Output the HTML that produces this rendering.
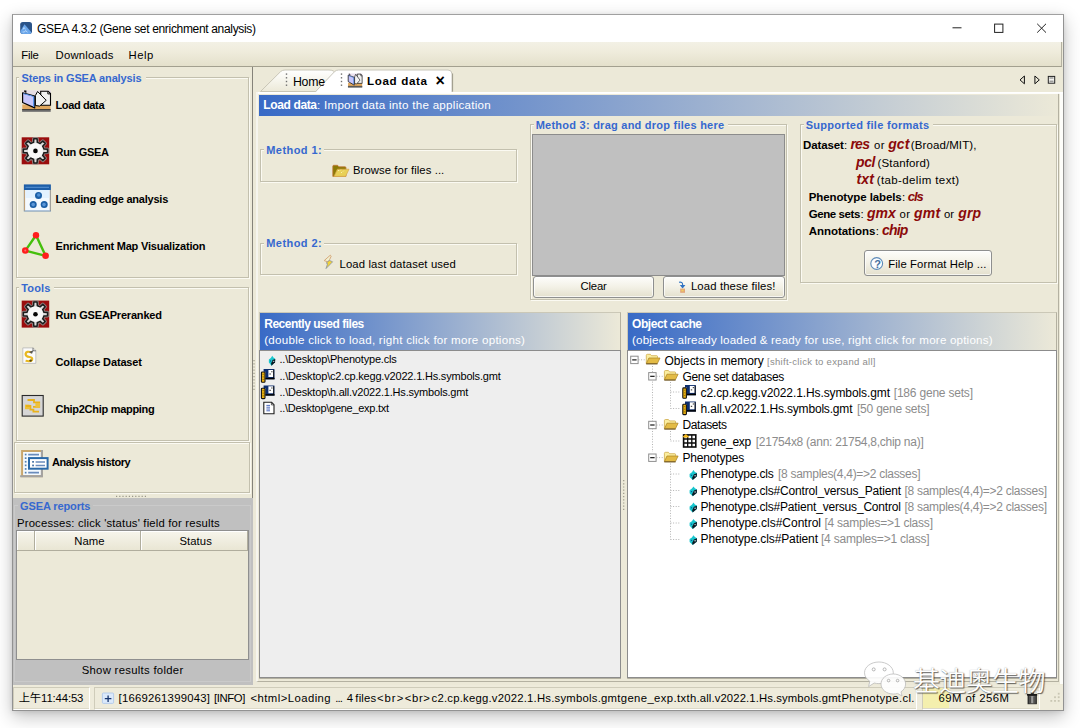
<!DOCTYPE html>
<html><head><meta charset="utf-8"><title>GSEA 4.3.2 (Gene set enrichment analysis)</title>
<style>
*{box-sizing:border-box;margin:0;padding:0}
html,body{width:1080px;height:728px;background:#fff;overflow:hidden}
body{font-family:"Liberation Sans","Noto Sans CJK SC",sans-serif;font-size:12px;color:#000;position:relative}
.a{position:absolute}
.t{position:absolute;white-space:nowrap;line-height:1}
#win{left:12px;top:14px;width:1052px;height:697px;background:#ece9d8;border:1px solid #929292;border-top-color:#a0a0a0;box-shadow:0 6px 17px rgba(0,0,0,.24),0 1px 5px rgba(0,0,0,.10)}
#title{left:13px;top:15px;width:1050px;height:27px;background:#fff}
#menu{left:13px;top:42px;width:1049px;height:25px;background:linear-gradient(#f3f1e5 0%,#efecdc 40%,#e4e0cb 100%);border-bottom:1px solid #a3a08f;border-right:1px solid #b5b2a2}
.grp{border:1px solid #c3c0ae;box-shadow:1px 1px 0 #fbfaf2, inset 1px 1px 0 #fbfaf2}
.mask{background:#ece9d8;height:3px}
.hdr{background:linear-gradient(90deg,#386ac6 0%,#ece9d8 100%)}
.btn{border:1px solid #8e8f8f;border-radius:3px;background:linear-gradient(#fdfdfb 0%,#f3f1e6 50%,#e4e0cd 100%);box-shadow:inset 0 0 0 1px rgba(255,255,255,.7)}
.sb{border:1px solid #fff;border-top-color:#cfccba;border-left-color:#cfccba;box-shadow:inset 0 -1px 0 #dcd9c8}
.th{border-right:1px solid #b0ad9d;border-bottom:1px solid #b0ad9d;background:linear-gradient(#f7f5ec,#e9e6d4);box-shadow:inset 1px 1px 0 #fff}
</style></head><body>
<div class="a" id="win"></div>
<div class="a" id="title"></div>
<div class="a" id="menu"></div>

<!-- LEFT PANEL groups -->
<div class="a grp" style="left:16px;top:77px;width:233px;height:201px"></div>
<div class="a mask" style="left:19px;top:76px;width:127px"></div>
<div class="a grp" style="left:16px;top:287px;width:233px;height:154px"></div>
<div class="a mask" style="left:19px;top:286px;width:35px"></div>
<div class="a grp" style="left:14px;top:442px;width:236px;height:51px"></div>
<!-- vertical divider -->
<div class="a" style="left:252px;top:67px;width:1px;height:618px;background:#85837a"></div>
<!-- reports -->
<div class="a" style="left:13px;top:498px;width:240px;height:187px;background:#c0c0c0"></div>
<div class="a" style="left:14px;top:505px;width:237px;height:177px;border:1px solid #cacaca"></div>
<div class="a" style="left:18px;top:503px;width:75px;height:4px;background:#c0c0c0"></div>
<div class="a" style="left:16px;top:530px;width:233px;height:130px;background:#ece9d8;border:1px solid #8f8f8f"></div>
<div class="a th" style="left:17px;top:531px;width:18px;height:20px"></div>
<div class="a th" style="left:35px;top:531px;width:106px;height:20px"></div>
<div class="a th" style="left:141px;top:531px;width:107px;height:20px"></div>

<!-- STATUS BAR -->
<div class="a" style="left:13px;top:685px;width:1050px;height:25px;background:#eeebdb"></div>
<div class="a sb" style="left:13px;top:687px;width:77px;height:23px"></div>
<div class="a sb" style="left:94px;top:687px;width:823px;height:23px"></div>
<div class="a sb" style="left:922px;top:687px;width:118px;height:23px"></div>
<div class="a" style="left:923px;top:688px;width:26px;height:20px;background:#f4efae"></div>

<!-- RIGHT content frame -->
<div class="a" style="left:256px;top:92px;width:803px;height:590px;border:1px solid #b4b1a1;border-top:none;border-left:2px solid #f6f5ee"></div>
<div class="a" style="left:1060px;top:92px;width:3px;height:592px;background:#fdfdfa"></div>
<div class="a hdr" style="left:259px;top:95px;width:799px;height:21px"></div>

<div class="a grp" style="left:260px;top:149px;width:257px;height:33px"></div>
<div class="a mask" style="left:264px;top:148px;width:60px"></div>
<div class="a grp" style="left:260px;top:243px;width:257px;height:32px"></div>
<div class="a mask" style="left:264px;top:242px;width:60px"></div>

<div class="a grp" style="left:530px;top:124px;width:257px;height:176px"></div>
<div class="a mask" style="left:534px;top:123px;width:194px"></div>
<div class="a" style="left:532px;top:134px;width:253px;height:142px;background:#c0c0c0;border:1px solid #8c8c8c"></div>
<div class="a btn" style="left:533px;top:276px;width:121px;height:22px"></div>
<div class="a btn" style="left:663px;top:276px;width:122px;height:22px"></div>

<div class="a grp" style="left:800px;top:124px;width:257px;height:159px"></div>
<div class="a mask" style="left:804px;top:123px;width:129px"></div>
<div class="a btn" style="left:864px;top:250px;width:128px;height:26px"></div>

<div class="a" style="left:259px;top:312px;width:362px;height:367px;border:1px solid #cbc8b7;border-right-color:#b3b0a0;border-bottom-color:#b3b0a0"></div>
<div class="a hdr" style="left:260px;top:313px;width:360px;height:37px"></div>
<div class="a" style="left:259px;top:350px;width:362px;height:328px;background:#eeeeee;border:1px solid #8c8c8c"></div>
<div class="a" style="left:627px;top:312px;width:430px;height:367px;border:1px solid #cbc8b7;border-right-color:#b3b0a0;border-bottom-color:#b3b0a0"></div>
<div class="a hdr" style="left:628px;top:313px;width:428px;height:37px"></div>
<div class="a" style="left:627px;top:350px;width:430px;height:328px;background:#fff;border:1px solid #8c8c8c"></div>

<svg class="a" style="left:0;top:0" width="1080" height="728" viewBox="0 0 1080 728">
<defs>
<g id="ld"><!-- load data icon, origin 0,0 size 29x21.5 -->
 <rect x="0.3" y="0" width="28.7" height="6" fill="#e2d6ea" opacity=".7"/>
 <path d="M0.5 14.2 L28.7 14.2 L28.7 19.4 L0.5 19.4Z" fill="#e0a860"/>
 <rect x="0.3" y="19.2" width="28.6" height="2.3" fill="#6a6a6a"/><rect x="0.3" y="18.8" width="28.6" height=".8" fill="#2a2a2a"/>
 <path d="M18.9 0.9 L26.3 0.9 L28.7 3.3 L28.7 15 L18.9 15Z" fill="#f0f0f0" stroke="#000" stroke-width="1.1"/>
 <path d="M26 1 L26 3.6 L28.6 3.6" fill="none" stroke="#000" stroke-width=".9"/>
 <path d="M13.6 5.2 L15.8 1.2 L24.4 10 L17.8 15.8 L13.6 15.2Z" fill="#f2f2f2" stroke="#000" stroke-width="1"/>
 <path d="M2.2 0.9 L4 0.9 L4 2.4" fill="none" stroke="#000" stroke-width="1.2"/>
 <path d="M0.8 2.5 L12.9 5.8 L12.9 17.6 L0.8 12.2Z" fill="#c6c6fc" stroke="#000" stroke-width="1.2" stroke-linejoin="round"/>
 <path d="M11.2 5.9 L12.5 6.2 L12.5 16.9 L11.2 16.4Z" fill="#5a96f0"/>
 <path d="M1.6 3.3 L11 5.9" stroke="#5a96f0" stroke-width="1"/>
</g>
<g id="gear"><!-- 27.5 x 27 -->
 <rect x="0" y="0" width="27.5" height="27" fill="#9a0d0d"/>
 <path d="M11.87 5.11 L12.13 1.41 L15.37 1.41 L15.63 5.11 L18.36 6.24 L21.15 3.80 L23.45 6.10 L21.01 8.89 L22.14 11.62 L25.84 11.88 L25.84 15.12 L22.14 15.38 L21.01 18.11 L23.45 20.90 L21.15 23.20 L18.36 20.76 L15.63 21.89 L15.37 25.59 L12.13 25.59 L11.87 21.89 L9.14 20.76 L6.35 23.20 L4.05 20.90 L6.49 18.11 L5.36 15.38 L1.66 15.12 L1.66 11.88 L5.36 11.62 L6.49 8.89 L4.05 6.10 L6.35 3.80 L9.14 6.24Z" fill="#eee" stroke="#8e8e8e" stroke-width="3.4" stroke-linejoin="round" opacity=".85"/>
 <path d="M11.87 5.11 L12.13 1.41 L15.37 1.41 L15.63 5.11 L18.36 6.24 L21.15 3.80 L23.45 6.10 L21.01 8.89 L22.14 11.62 L25.84 11.88 L25.84 15.12 L22.14 15.38 L21.01 18.11 L23.45 20.90 L21.15 23.20 L18.36 20.76 L15.63 21.89 L15.37 25.59 L12.13 25.59 L11.87 21.89 L9.14 20.76 L6.35 23.20 L4.05 20.90 L6.49 18.11 L5.36 15.38 L1.66 15.12 L1.66 11.88 L5.36 11.62 L6.49 8.89 L4.05 6.10 L6.35 3.80 L9.14 6.24Z" fill="#dcdcdc" stroke="#1c1c1c" stroke-width="1.5" stroke-linejoin="round"/>
 <circle cx="13.75" cy="13.5" r="7.6" fill="#f8f8f8"/>
 <circle cx="13.75" cy="13.6" r="2.3" fill="#050505"/>
</g>
<g id="fold"><!-- open folder 14.5 x 10.3 -->
 <path d="M0.6 9.6 L0.6 1.6 Q0.6 .5 1.7 .5 L4.6 .5 L5.8 1.9 L11 1.9 Q11.8 1.9 11.8 2.8 L11.8 4" fill="#fbeea0" stroke="#c9a23a" stroke-width=".7"/>
 <path d="M0.6 9.8 L3.2 4.2 L14.3 4.2 L11.6 9.8Z" fill="#e3bb45" stroke="#a8801e" stroke-width=".7"/>
 <path d="M0.5 10.1 L11.8 10.1" stroke="#5a4210" stroke-width=".9"/>
</g>
<g id="gmt"><!-- 14.5 x 14 -->
 <path d="M2.8 0.4 L13.6 0.4 L13.6 10.6 L4.6 10.6 L4.6 3 L2.8 3Z" fill="#0c2d6e"/>
 <path d="M7.6 1.3 L12.6 1.3 L12.6 8.3 L7.6 8.3Z" fill="#fff"/>
 <rect x="10.6" y="2.4" width="1" height="1.2" fill="#222"/><rect x="8.6" y="4.8" width="1.4" height="1" fill="#222"/>
 <path d="M4.6 9.9 L13.8 9.9" stroke="#000" stroke-width="1.5"/>
 <path d="M12.9 1.2 L12.9 9.4" stroke="#000" stroke-width=".9"/>
 <rect x="0.6" y="3.3" width="3.6" height="10.3" rx=".8" fill="#ecb211" stroke="#111" stroke-width="1.1"/>
 <path d="M1.6 5.6h1.6M1.6 8.2h1.6M1.6 10.8h1.6" stroke="#8a6a00" stroke-width=".8"/>
</g>
<g id="phe"><!-- gem 8 x 10 -->
 <path d="M4.2 0 L5.6 1.8 L7.7 3 L7.5 6.4 L3.4 9.9 L0.3 6.8 L0.3 3.8 L2.6 2.2Z" fill="#19c6ce"/>
 <path d="M4.6 4.2 L7.7 3.1 L7.5 6.5 L3.4 9.9 L2.8 7.8Z" fill="#0d1a24"/>
 <ellipse cx="5.8" cy="5.6" rx="1" ry=".7" fill="#9fb2bc"/>
 <rect x="1.6" y="4.6" width="1.2" height="1.2" fill="#0a5a9a"/>
</g>
<g id="box"><!-- expand box 8x8 -->
 <rect x=".5" y=".5" width="7.4" height="7.4" fill="#fff" stroke="#8e8e8e" stroke-width="1"/>
 <path d="M2 4.2h4.4" stroke="#000" stroke-width="1.1"/>
</g>
</defs>

<!-- tab strip -->
<defs><linearGradient id="tg" x1="0" y1="0" x2="0" y2="1"><stop offset="0" stop-color="#ffffff"/><stop offset=".45" stop-color="#f7f6ee"/><stop offset="1" stop-color="#ece9d8"/></linearGradient></defs>

<path d="M258 92.5 H1063 M258 93.4 H1063" stroke="#fff" stroke-width="1"/>
<path d="M260.5 91.5 L280.6 71.6 Q282.4 70 285 70 L329 70 Q332.4 70 333.6 71.2 L335.5 73 L335.5 91.5Z" fill="url(#tg)" stroke="#c4c1b1" stroke-width=".9"/>
<path d="M315.2 92.6 L334.4 71.8 Q336 70 338.6 70 L448 70 Q452 70 452 74 L452 92.6Z" fill="#fff"/>
<path d="M315.2 92 L334.4 71.8 Q336 70 338.6 70 L448 70 Q452 70 452 74 L452 92" fill="none" stroke="#c9c7bc" stroke-width="1"/>
<path d="M452.6 73.5 V91.6" stroke="#9d9a8a" stroke-width="1"/>
<g fill="#6f6f6f"><rect x="285.8" y="73.4" width="1.4" height="1.4"/><rect x="285.8" y="77.1" width="1.4" height="1.4"/><rect x="285.8" y="80.8" width="1.4" height="1.4"/><rect x="285.8" y="84.5" width="1.4" height="1.4"/>
<rect x="340.8" y="73.4" width="1.4" height="1.4"/><rect x="340.8" y="77.1" width="1.4" height="1.4"/><rect x="340.8" y="80.8" width="1.4" height="1.4"/><rect x="340.8" y="84.5" width="1.4" height="1.4"/></g>
<!-- splitter grips -->
<path d="M116 496.3 H147" stroke="#9a9888" stroke-width="1.2" stroke-dasharray="1.2 2"/>
<path d="M254 360 V391" stroke="#9a9888" stroke-width="1.2" stroke-dasharray="1.2 2"/>
<path d="M623.7 480 V512" stroke="#9a9888" stroke-width="1.2" stroke-dasharray="1.2 2"/>

<!-- title icon -->
<rect x="20.2" y="22" width="11.8" height="11.9" rx="2.6" fill="#2b5489"/>
<path d="M20.4 31 L24.5 24.2 L31.6 32.6 Q31 33.9 29.4 33.9 L22.8 33.9 Q20.4 33.9 20.3 31.5Z" fill="#6aa6ea"/>
<path d="M23 29.5l1-2 1.4 1.8M22.5 32h2l1-1.4 2 1.6" stroke="#d8ecff" stroke-width=".7" fill="none"/>
<!-- window controls -->
<path d="M952.5 27.8h9" stroke="#222" stroke-width="1"/>
<rect x="994.6" y="24.1" width="8.3" height="8.3" fill="none" stroke="#222" stroke-width="1"/>
<path d="M1037.2 23.8l8.8 8.8M1046 23.8l-8.8 8.8" stroke="#222" stroke-width="1"/>

<!-- left panel icons -->
<use href="#ld" x="21.8" y="90.3"/>
<use href="#gear" x="21.7" y="137.3"/>
<!-- leading edge -->
<g>
 <rect x="24.3" y="185" width="26.2" height="26" fill="#f4faff" stroke="#6c8fb4" stroke-width="1"/>
 <path d="M24.6 190v20.6" stroke="#c4a070" stroke-width="1"/><path d="M50.2 190v20.6" stroke="#b8a890" stroke-width="1"/>
 <rect x="24" y="184.6" width="26.7" height="5.4" fill="#1d5ea8"/>
 <path d="M25.5 187.3h23.5" stroke="#5f9ada" stroke-width=".9"/>
 <rect x="25.5" y="190" width="23.8" height="8" fill="#dff0ff" opacity=".8"/>
 <circle cx="38.5" cy="195.5" r="3.5" fill="#1b5fa6"/><circle cx="38.7" cy="195" r="1.7" fill="#4f8fd4"/>
 <circle cx="33.2" cy="204.5" r="3.5" fill="#1b5fa6"/><circle cx="33.2" cy="204.6" r="1.8" fill="#5a96d8"/>
 <circle cx="44.2" cy="204.5" r="3.5" fill="#1b5fa6"/><circle cx="44" cy="204.6" r="1.8" fill="#5a96d8"/>
</g>
<!-- enrichment map -->
<g><path d="M36 235.3 L25.4 250.6 L45.6 255.8Z" fill="none" stroke="#45bf0c" stroke-width="2.4" stroke-linejoin="round"/>
 <circle cx="36" cy="235.2" r="3.2" fill="#ff1d1d"/><circle cx="25.3" cy="250.5" r="3.3" fill="#ff1d1d"/><circle cx="45.6" cy="255.8" r="3.3" fill="#ff1d1d"/>
 <circle cx="25.3" cy="250.5" r="1" fill="#ff7070"/></g>
<use href="#gear" x="21.7" y="300.6"/>
<!-- collapse dataset -->
<g><path d="M22.8 347.9 L33.2 347.9 L35.8 350.5 L35.8 363.4 L22.8 363.4Z" fill="#fbfbfb" stroke="#b8b8b8" stroke-width=".8"/>
 <path d="M33 347.8 L33 350.8 L35.9 350.8" fill="none" stroke="#555" stroke-width=".8"/>
 <path d="M31.8 352.4 Q26 350.6 25.6 354 Q25.6 356.6 29.5 357 Q33 357.6 32 360 Q30.6 362 25.6 360.8" fill="none" stroke="#e8b820" stroke-width="2.2"/>
 <path d="M29 352 L33.4 350.2 L32 353.8" fill="#555"/>
 <circle cx="30.6" cy="360.6" r="1.2" fill="#5a4a10"/></g>
<!-- chip2chip -->
<g><rect x="22.2" y="395.5" width="21" height="20.6" fill="#d6d6d6" stroke="#2a2a2a" stroke-width="1.1"/>
 <path d="M27.5 400 h6.5 v2.4 h5.2 v4.4 h-6.2" fill="none" stroke="#e9b21a" stroke-width="1.8"/>
 <path d="M35.4 403 h4.6 v4.6 h-4.6z" fill="#eec23a"/>
 <path d="M25 404.6 h4.6 v4.6 h-4.6z" fill="#eec23a"/>
 <path d="M26 406 h4.4 v3.6 h3 v2 h5.6" fill="none" stroke="#e9b21a" stroke-width="1.8"/></g>
<!-- analysis history -->
<g><rect x="22.1" y="451" width="19.8" height="25.2" fill="#f4faff" stroke="#c8a66c" stroke-width="2"/>
 <path d="M21.1 477.2 L42.9 477.2 L42.9 451" fill="none" stroke="#a2a2a2" stroke-width="2" transform="translate(-1,-1)"/>
 <g fill="#5580b0"><rect x="24.8" y="453.7" width="1.7" height="1.7"/><rect x="24.8" y="457.3" width="1.7" height="1.7"/><rect x="24.8" y="460.9" width="1.7" height="1.7"/><rect x="24.8" y="464.5" width="1.7" height="1.7"/><rect x="24.8" y="468.1" width="1.7" height="1.7"/><rect x="24.8" y="471.8" width="1.7" height="1.7"/></g>
 <path d="M28.2 454.6h10.8M28.2 472.6h10.8" stroke="#6a8cbc" stroke-width="1.6"/>
 <rect x="29" y="458.1" width="18.6" height="10.6" fill="#fff" stroke="#2a69a8" stroke-width="2"/>
 <rect x="32.2" y="461" width="1.7" height="1.7" fill="#3a6aa0"/><rect x="32.2" y="464.6" width="1.7" height="1.7" fill="#3a6aa0"/>
 <path d="M35.6 461.9h9.4M35.6 465.5h9.4" stroke="#6a8cbc" stroke-width="1.5"/></g>

<!-- tab strip icon -->
<use href="#ld" transform="translate(347.8,73.5) scale(.5,.66)"/>
<!-- tab nav -->
<path d="M1024.4 76 L1024.4 83.8 L1020 79.9Z" fill="#ece9d8" stroke="#111" stroke-width="1"/>
<path d="M1034.9 76 L1034.9 83.8 L1039.3 79.9Z" fill="#ece9d8" stroke="#111" stroke-width="1"/>
<rect x="1048.3" y="76.4" width="6.4" height="6.8" fill="#f4f4f0" stroke="#222" stroke-width="1"/><path d="M1049.5 78h4M1049.5 81.2h4" stroke="#555" stroke-width=".8"/>

<!-- browse folder -->
<g><path d="M332.8 176.4 L332.8 166.2 Q332.8 165.3 333.8 165.3 L337.6 165.3 L338.8 166.8 L345 166.8 Q346 166.8 346 167.8 L346 176.4Z" fill="#8c7a05" stroke="#c4783a" stroke-width=".8"/>
 <path d="M334 176.4 L337.4 169.2 L349 169.2 L345.6 176.4Z" fill="#e8d055" stroke="#d8a850" stroke-width=".7"/>
 <path d="M338 171l1-1M341 173l1-1M340 170.5l.8-.8M343 171.5l.8-.8" stroke="#fff6c0" stroke-width=".8"/></g>
<!-- load last (bolt) -->
<g><path d="M330.3 255.2 L324.2 260.6 L328.2 262 L329.6 259.6 L331.2 256.2Z" fill="#f0f0d0" stroke="#d2a070" stroke-width=".9"/>
 <path d="M329.4 260.4 L332.6 261.8 L326 268.6 L327.6 263.6 L326.2 263Z" fill="#f4d434" stroke="#7a88a8" stroke-width=".7"/></g>
<!-- load these files icon -->
<g><path d="M679 282.2 Q682.6 281.6 682.6 284.2 L682.6 286" fill="none" stroke="#2f72c2" stroke-width="1.1"/>
 <path d="M679.8 285 L685.4 285 L682.6 288.4Z" fill="#2f72c2"/>
 <rect x="680.2" y="288.6" width="4.8" height="4.2" fill="#e2a478"/><rect x="681.4" y="289.6" width="2.2" height="1.8" fill="#f0d060"/></g>
<!-- help icon circle -->
<circle cx="876.7" cy="263.5" r="5.9" fill="#fbfdff" stroke="#5d8ab8" stroke-width="1.1"/>

<!-- list icons -->
<use href="#phe" transform="translate(268.6,355.8) scale(.86,1)"/>
<use href="#gmt" x="260.8" y="368.7"/>
<use href="#gmt" x="260.8" y="385"/>
<g><path d="M263.8 402.3 L271.6 402.3 L274 404.7 L274 413.7 L263.8 413.7Z" fill="#fff" stroke="#1c1c1c" stroke-width="1.1"/>
 <path d="M271.4 402.4 L271.4 404.9 L274 404.9" fill="none" stroke="#333" stroke-width=".8"/>
 <path d="M266.4 405.4h3.6M266.4 407.2h3.6M266.4 409h3.6M266.4 410.8h3.6" stroke="#3a5ab8" stroke-width=".9"/></g>

<!-- tree lines -->
<g stroke="#b4b4b4" stroke-width="1" stroke-dasharray="1 1.6" fill="none">
 <path d="M638.5 359.8h7"/><path d="M652.5 366v86"/>
 <path d="M656.5 376.3h6.5"/><path d="M656.5 425h6.5"/><path d="M656.5 457.6h6.5"/>
 <path d="M670.5 382v26.5"/><path d="M670.5 392h10"/><path d="M670.5 408.5h10"/>
 <path d="M670.5 431v10"/><path d="M670.5 441h10"/>
 <path d="M670.5 463.5v76"/><path d="M670.5 474h10"/><path d="M670.5 490.5h10"/><path d="M670.5 506.5h10"/><path d="M670.5 523h10"/><path d="M670.5 539.5h10"/>
</g>
<use href="#box" x="630.2" y="355.7"/><use href="#fold" x="645.7" y="353.8"/>
<use href="#box" x="648.2" y="372.1"/><use href="#fold" x="663.8" y="370"/>
<use href="#gmt" x="682.2" y="384.6"/><use href="#gmt" x="682.2" y="401"/>
<use href="#box" x="648.2" y="420.8"/><use href="#fold" x="663.8" y="419"/>
<!-- gene_exp grid -->
<g><rect x="683.6" y="434.9" width="12.2" height="12.1" fill="#fff" stroke="#0a0a0a" stroke-width="1.6"/>
 <path d="M687.7 435v12M691.8 435v12M683.6 439h12.2M683.6 443h12.2" stroke="#0a0a0a" stroke-width="1.3"/>
 <path d="M682.4 437 L685.8 434 L689.4 437 L685.8 437.8Z" fill="#f4b81a"/></g>
<use href="#box" x="648.2" y="453.5"/><use href="#fold" x="663.8" y="451.8"/>
<use href="#phe" x="689.3" y="470.1"/><use href="#phe" x="689.3" y="486.4"/><use href="#phe" x="689.3" y="502.6"/><use href="#phe" x="689.3" y="519"/><use href="#phe" x="689.3" y="535.2"/>

<!-- status plus icon -->
<rect x="102.4" y="693" width="11.2" height="10.4" rx="1" fill="#dbe9fb" stroke="#a9c4ea" stroke-width=".8"/>
<path d="M104.8 698.6h6.6M108.1 695.4v6.6" stroke="#17356e" stroke-width="1.3"/>
<!-- trash -->
<defs><linearGradient id="trg" x1="0" y1="0" x2="1" y2="0"><stop offset="0" stop-color="#2a2a2a"/><stop offset=".5" stop-color="#a4a4a4"/><stop offset="1" stop-color="#2a2a2a"/></linearGradient></defs>
<g><rect x="1028" y="695.4" width="8.4" height="8.4" fill="url(#trg)" stroke="#222" stroke-width=".8"/><path d="M1027 694.8h10.2" stroke="#1a1a1a" stroke-width="1.7"/><path d="M1030.8 693.2h3" stroke="#1a1a1a" stroke-width="1.3"/>
 <path d="M1030.4 696.6v6.4M1034 696.6v6.4" stroke="#333" stroke-width=".7"/></g>
<!-- resize grip -->
<g fill="#c9c6b3"><rect x="1057.8" y="692.8" width="1.8" height="1.8"/><rect x="1054.1" y="696.3" width="1.8" height="1.8"/><rect x="1057.8" y="696.3" width="1.8" height="1.8"/><rect x="1050.4" y="700" width="1.8" height="1.8"/><rect x="1054.1" y="700" width="1.8" height="1.8"/><rect x="1057.8" y="700" width="1.8" height="1.8"/></g>

<!-- watermark icon -->
<g opacity=".93">
 <g fill="#fff" stroke="#b9b9b9" stroke-width=".8">
 <path d="M878.9 662 C871 662 864.5 666.8 864.5 672.8 C864.5 676.2 866.6 679.2 869.8 681.2 L868.6 686.6 L874.2 683 C875.7 683.4 877.3 683.6 878.9 683.6 C886.8 683.6 893.3 678.8 893.3 672.8 C893.3 666.8 886.8 662 878.9 662Z"/>
 <path d="M893.3 674 C886.5 674 881 678.4 881 684 C881 689.6 886.5 694 893.3 694 C894.8 694 896.2 693.8 897.5 693.4 L902 696 L901 691.8 C903.8 690 905.6 687.2 905.6 684 C905.6 678.4 900.1 674 893.3 674Z"/>
 </g>
 <circle cx="873.7" cy="669.4" r="1.5" fill="#fff" stroke="#a8a8a8" stroke-width=".9"/><circle cx="884.6" cy="669.4" r="1.5" fill="#fff" stroke="#a8a8a8" stroke-width=".9"/>
 <circle cx="888.6" cy="680.6" r="1.3" fill="#fff" stroke="#a8a8a8" stroke-width=".9"/><circle cx="897.6" cy="680.6" r="1.3" fill="#fff" stroke="#a8a8a8" stroke-width=".9"/>
</g>
</svg>

<div class="t" id="t0" style="left:37.00px;top:23.00px;font-size:12.01px;letter-spacing:-0.328px;">GSEA 4.3.2 (Gene set enrichment analysis)</div>
<div class="t" id="t1" style="left:21.30px;top:50.00px;font-size:11.3px;letter-spacing:-0.234px;">File</div>
<div class="t" id="t2" style="left:55.50px;top:50.00px;font-size:11.3px;letter-spacing:0.239px;">Downloads</div>
<div class="t" id="t3" style="left:128.50px;top:50.00px;font-size:11.3px;letter-spacing:0.522px;">Help</div>
<div class="t" id="t4" style="left:21.50px;top:73.00px;font-size:11px;letter-spacing:-0.147px;color:#3668cf;font-weight:bold;">Steps in GSEA analysis</div>
<div class="t" id="t5" style="left:55.50px;top:100.00px;font-size:11px;letter-spacing:-0.369px;font-weight:bold;">Load data</div>
<div class="t" id="t6" style="left:55.50px;top:147.00px;font-size:11px;letter-spacing:-0.304px;font-weight:bold;">Run GSEA</div>
<div class="t" id="t7" style="left:55.50px;top:194.00px;font-size:11px;letter-spacing:-0.231px;font-weight:bold;">Leading edge analysis</div>
<div class="t" id="t8" style="left:55.50px;top:241.00px;font-size:11px;letter-spacing:-0.210px;font-weight:bold;">Enrichment Map Visualization</div>
<div class="t" id="t9" style="left:55.50px;top:310.00px;font-size:11px;letter-spacing:-0.183px;font-weight:bold;">Run GSEAPreranked</div>
<div class="t" id="t10" style="left:55.50px;top:357.00px;font-size:11px;letter-spacing:-0.144px;font-weight:bold;">Collapse Dataset</div>
<div class="t" id="t11" style="left:55.50px;top:404.00px;font-size:11px;letter-spacing:-0.290px;font-weight:bold;">Chip2Chip mapping</div>
<div class="t" id="t12" style="left:21.30px;top:283.00px;font-size:11px;letter-spacing:0.121px;color:#3668cf;font-weight:bold;">Tools</div>
<div class="t" id="t13" style="left:52.00px;top:457.00px;font-size:11px;letter-spacing:-0.416px;font-weight:bold;">Analysis history</div>
<div class="t" id="t14" style="left:20.00px;top:501.00px;font-size:11px;letter-spacing:-0.112px;color:#3668cf;font-weight:bold;">GSEA reports</div>
<div class="t" id="t15" style="left:17.00px;top:518.00px;font-size:11.3px;letter-spacing:0.177px;">Processes: click &#x27;status&#x27; field for results</div>
<div class="t" id="t16" style="left:74.20px;top:536.00px;font-size:11.3px;letter-spacing:0.053px;">Name</div>
<div class="t" id="t17" style="left:179.40px;top:536.00px;font-size:11.3px;letter-spacing:0.074px;">Status</div>
<div class="t" id="t18" style="left:81.70px;top:665.00px;font-size:11.3px;letter-spacing:0.301px;">Show results folder</div>
<div class="t" id="t19" style="left:18.70px;top:693.00px;font-size:11.3px;letter-spacing:-0.115px;">上午11:44:53</div>
<div class="t" id="t20" style="left:118.60px;top:693.00px;font-size:11.3px;letter-spacing:0.238px;">[1669261399043]</div>
<div class="t" id="t21" style="left:213.90px;top:693.00px;font-size:11.3px;letter-spacing:-0.353px;">[INFO]</div>
<div class="t" id="t22" style="left:250.50px;top:693.00px;font-size:11.3px;letter-spacing:0.446px;">&lt;html&gt;Loading</div>
<div class="t" id="t23" style="left:335.20px;top:693.00px;font-size:11.3px;letter-spacing:-0.911px;">...</div>
<div class="t" id="t24" style="left:346.80px;top:693.00px;font-size:11.3px;letter-spacing:0.000px;">4</div>
<div class="t" id="t25" style="left:355.30px;top:693.00px;font-size:11.3px;letter-spacing:0.202px;">files</div>
<div class="t" id="t26" style="left:376.90px;top:693.00px;font-size:11.3px;letter-spacing:1.050px;">&lt;br&gt;</div>
<div class="t" id="t27" style="left:404.80px;top:693.00px;font-size:11.3px;letter-spacing:0.617px;">&lt;br&gt;</div>
<div class="t" id="t28" style="left:431.50px;top:693.00px;font-size:11.3px;letter-spacing:0.229px;">c2.cp.kegg.v2022.1.Hs.symbols.gmt</div>
<div class="t" id="t29" style="left:620.80px;top:693.00px;font-size:11.3px;letter-spacing:0.372px;">gene_exp.txt</div>
<div class="t" id="t30" style="left:690.10px;top:693.00px;font-size:11.3px;letter-spacing:0.120px;">h.all.v2022.1.Hs.symbols.gmt</div>
<div class="t" id="t31" style="left:841.40px;top:693.00px;font-size:11.3px;letter-spacing:0.386px;">Phenotype.cl.</div>
<div class="t" id="t32" style="left:938.60px;top:693.00px;font-size:11.3px;letter-spacing:0.426px;">69M of 256M</div>
<div class="t" id="t33" style="left:293.00px;top:76.00px;font-size:12.3px;letter-spacing:-0.271px;clip-path:polygon(0 -2px,40.5px -2px,26.5px 120%,0 120%);">Home</div>
<div class="t" id="t34" style="left:367.00px;top:75.00px;font-size:11.6px;letter-spacing:0.654px;font-weight:bold;">Load data</div>
<div class="t" id="t35" style="left:435.50px;top:73.00px;font-size:16px;letter-spacing:0.000px;font-weight:bold;">×</div>
<div class="t" id="t36" style="left:263.25px;top:99.00px;font-size:12px;letter-spacing:-0.365px;color:#fff;font-weight:bold;">Load data</div>
<div class="t" id="t37" style="left:317.00px;top:99.00px;font-size:11.6px;letter-spacing:0.265px;color:#fff;">: Import data into the application</div>
<div class="t" id="t38" style="left:266.25px;top:145.00px;font-size:11px;letter-spacing:0.443px;color:#3668cf;font-weight:bold;">Method 1:</div>
<div class="t" id="t39" style="left:353.00px;top:165.00px;font-size:11.3px;letter-spacing:0.077px;">Browse for files ...</div>
<div class="t" id="t40" style="left:266.25px;top:238.00px;font-size:11px;letter-spacing:0.443px;color:#3668cf;font-weight:bold;">Method 2:</div>
<div class="t" id="t41" style="left:339.50px;top:259.00px;font-size:11.3px;letter-spacing:0.122px;">Load last dataset used</div>
<div class="t" id="t42" style="left:535.70px;top:120.00px;font-size:11px;letter-spacing:0.246px;color:#3668cf;font-weight:bold;">Method 3: drag and drop files here</div>
<div class="t" id="t43" style="left:580.50px;top:281.00px;font-size:11.3px;letter-spacing:-0.175px;">Clear</div>
<div class="t" id="t44" style="left:690.90px;top:281.00px;font-size:11.3px;letter-spacing:0.145px;">Load these files!</div>
<div class="t" id="t45" style="left:805.70px;top:120.00px;font-size:11px;letter-spacing:0.284px;color:#3668cf;font-weight:bold;">Supported file formats</div>
<div class="t" id="t46" style="left:803.00px;top:140.00px;font-size:11.5px;letter-spacing:-0.127px;font-weight:bold;">Dataset</div>
<div class="t" id="t47" style="left:844.00px;top:140.00px;font-size:11.5px;letter-spacing:0.000px;">:</div>
<div class="t" id="t48" style="left:850.40px;top:137.00px;font-size:14px;letter-spacing:-0.716px;color:#8b0a0a;font-weight:bold;font-style:italic;">res</div>
<div class="t" id="t49" style="left:874.00px;top:140.00px;font-size:11.3px;letter-spacing:0.553px;">or</div>
<div class="t" id="t50" style="left:888.20px;top:137.00px;font-size:14px;letter-spacing:0.050px;color:#8b0a0a;font-weight:bold;font-style:italic;">gct</div>
<div class="t" id="t51" style="left:910.80px;top:140.00px;font-size:11.5px;letter-spacing:0.096px;">(Broad/MIT),</div>
<div class="t" id="t52" style="left:855.90px;top:155.00px;font-size:14px;letter-spacing:-0.317px;color:#8b0a0a;font-weight:bold;font-style:italic;">pcl</div>
<div class="t" id="t53" style="left:877.60px;top:158.00px;font-size:11.5px;letter-spacing:0.129px;">(Stanford)</div>
<div class="t" id="t54" style="left:856.50px;top:172.00px;font-size:14px;letter-spacing:0.188px;color:#8b0a0a;font-weight:bold;font-style:italic;">txt</div>
<div class="t" id="t55" style="left:876.70px;top:175.00px;font-size:11.5px;letter-spacing:0.388px;">(tab-delim text)</div>
<div class="t" id="t56" style="left:808.70px;top:192.00px;font-size:11.5px;letter-spacing:-0.100px;font-weight:bold;">Phenotype labels</div>
<div class="t" id="t57" style="left:902.00px;top:192.00px;font-size:11.5px;letter-spacing:0.000px;">:</div>
<div class="t" id="t58" style="left:907.80px;top:190.00px;font-size:13px;letter-spacing:-1.039px;color:#8b0a0a;font-weight:bold;font-style:italic;">cls</div>
<div class="t" id="t59" style="left:808.70px;top:209.00px;font-size:11.5px;letter-spacing:-0.411px;font-weight:bold;">Gene sets</div>
<div class="t" id="t60" style="left:860.60px;top:209.00px;font-size:11.5px;letter-spacing:0.000px;">:</div>
<div class="t" id="t61" style="left:867.00px;top:206.00px;font-size:14px;letter-spacing:-0.048px;color:#8b0a0a;font-weight:bold;font-style:italic;">gmx</div>
<div class="t" id="t62" style="left:899.40px;top:209.00px;font-size:11.3px;letter-spacing:0.553px;">or</div>
<div class="t" id="t63" style="left:913.90px;top:206.00px;font-size:14px;letter-spacing:0.314px;color:#8b0a0a;font-weight:bold;font-style:italic;">gmt</div>
<div class="t" id="t64" style="left:944.00px;top:209.00px;font-size:11.3px;letter-spacing:-0.047px;">or</div>
<div class="t" id="t65" style="left:958.30px;top:206.00px;font-size:14px;letter-spacing:0.069px;color:#8b0a0a;font-weight:bold;font-style:italic;">grp</div>
<div class="t" id="t66" style="left:808.70px;top:226.00px;font-size:11.5px;letter-spacing:-0.028px;font-weight:bold;">Annotations</div>
<div class="t" id="t67" style="left:875.70px;top:226.00px;font-size:11.5px;letter-spacing:0.000px;">:</div>
<div class="t" id="t68" style="left:882.10px;top:223.00px;font-size:14px;letter-spacing:-0.827px;color:#8b0a0a;font-weight:bold;font-style:italic;">chip</div>
<div class="t" id="t69" style="left:888.20px;top:259.00px;font-size:11.3px;letter-spacing:0.113px;">File Format Help ...</div>
<div class="t" id="t70" style="left:874.20px;top:259.00px;font-size:11px;letter-spacing:0.000px;color:#456f9e;font-weight:bold;">?</div>
<div class="t" id="t71" style="left:913.00px;top:666.00px;font-size:27px;letter-spacing:-0.625px;font-family:'Noto Sans CJK SC',sans-serif;font-weight:350;color:#fff;opacity:.97;text-shadow:1px 1px 1px rgba(40,40,40,.7),0 0 1px rgba(90,90,90,.55);">基迪奥生物</div>
<div class="t" id="t72" style="left:264.25px;top:318.00px;font-size:12px;letter-spacing:-0.484px;color:#fff;font-weight:bold;">Recently used files</div>
<div class="t" id="t73" style="left:264.25px;top:334.00px;font-size:11.6px;letter-spacing:0.248px;color:#fff;">(double click to load, right click for more options)</div>
<div class="t" id="t74" style="left:632.00px;top:318.00px;font-size:12px;letter-spacing:-0.428px;color:#fff;font-weight:bold;">Object cache</div>
<div class="t" id="t75" style="left:632.00px;top:334.00px;font-size:11.6px;letter-spacing:0.191px;color:#fff;">(objects already loaded &amp; ready for use, right click for more options)</div>
<div class="t" id="t76" style="left:279.50px;top:354.00px;font-size:11px;letter-spacing:-0.193px;">..\Desktop\Phenotype.cls</div>
<div class="t" id="t77" style="left:279.50px;top:371.00px;font-size:11px;letter-spacing:-0.187px;">..\Desktop\c2.cp.kegg.v2022.1.Hs.symbols.gmt</div>
<div class="t" id="t78" style="left:279.50px;top:387.00px;font-size:11px;letter-spacing:-0.197px;">..\Desktop\h.all.v2022.1.Hs.symbols.gmt</div>
<div class="t" id="t79" style="left:279.50px;top:403.00px;font-size:11px;letter-spacing:-0.276px;">..\Desktop\gene_exp.txt</div>
<div class="t" id="t80" style="left:664.50px;top:355.00px;font-size:12.01px;letter-spacing:-0.049px;">Objects in memory</div>
<div class="t" id="t81" style="left:767.00px;top:357.00px;font-size:9.5px;letter-spacing:0.294px;color:#8c8c8c;">[shift-click to expand all]</div>
<div class="t" id="t82" style="left:682.50px;top:371.00px;font-size:12.01px;letter-spacing:-0.334px;">Gene set databases</div>
<div class="t" id="t83" style="left:700.50px;top:387.00px;font-size:12.01px;letter-spacing:-0.102px;">c2.cp.kegg.v2022.1.Hs.symbols.gmt</div>
<div class="t" id="t84" style="left:893.75px;top:387.00px;font-size:12.01px;letter-spacing:-0.201px;color:#8c8c8c;">[186 gene sets]</div>
<div class="t" id="t85" style="left:700.50px;top:403.00px;font-size:12.01px;letter-spacing:-0.175px;">h.all.v2022.1.Hs.symbols.gmt</div>
<div class="t" id="t86" style="left:857.00px;top:403.00px;font-size:12.01px;letter-spacing:-0.222px;color:#8c8c8c;">[50 gene sets]</div>
<div class="t" id="t87" style="left:682.50px;top:419.00px;font-size:12.01px;letter-spacing:-0.408px;">Datasets</div>
<div class="t" id="t88" style="left:700.50px;top:436.00px;font-size:12.01px;letter-spacing:-0.281px;">gene_exp</div>
<div class="t" id="t89" style="left:755.75px;top:436.00px;font-size:12.01px;letter-spacing:-0.263px;color:#8c8c8c;">[21754x8 (ann: 21754,8,chip na)]</div>
<div class="t" id="t90" style="left:682.50px;top:452.00px;font-size:12.01px;letter-spacing:-0.182px;">Phenotypes</div>
<div class="t" id="t91" style="left:700.50px;top:468.00px;font-size:12.01px;letter-spacing:-0.178px;">Phenotype.cls</div>
<div class="t" id="t92" style="left:778.00px;top:468.00px;font-size:12.01px;letter-spacing:-0.291px;color:#8c8c8c;">[8 samples(4,4)=&gt;2 classes]</div>
<div class="t" id="t93" style="left:700.50px;top:485.00px;font-size:12.01px;letter-spacing:-0.180px;">Phenotype.cls#Control_versus_Patient</div>
<div class="t" id="t94" style="left:904.50px;top:485.00px;font-size:12.01px;letter-spacing:-0.291px;color:#8c8c8c;">[8 samples(4,4)=&gt;2 classes]</div>
<div class="t" id="t95" style="left:700.50px;top:501.00px;font-size:12.01px;letter-spacing:-0.180px;">Phenotype.cls#Patient_versus_Control</div>
<div class="t" id="t96" style="left:904.50px;top:501.00px;font-size:12.01px;letter-spacing:-0.291px;color:#8c8c8c;">[8 samples(4,4)=&gt;2 classes]</div>
<div class="t" id="t97" style="left:700.50px;top:517.00px;font-size:12.01px;letter-spacing:-0.013px;">Phenotype.cls#Control</div>
<div class="t" id="t98" style="left:824.40px;top:517.00px;font-size:12.01px;letter-spacing:-0.218px;color:#8c8c8c;">[4 samples=&gt;1 class]</div>
<div class="t" id="t99" style="left:700.50px;top:533.00px;font-size:12.01px;letter-spacing:-0.096px;">Phenotype.cls#Patient</div>
<div class="t" id="t100" style="left:821.00px;top:533.00px;font-size:12.01px;letter-spacing:-0.218px;color:#8c8c8c;">[4 samples=&gt;1 class]</div>
</body></html>
